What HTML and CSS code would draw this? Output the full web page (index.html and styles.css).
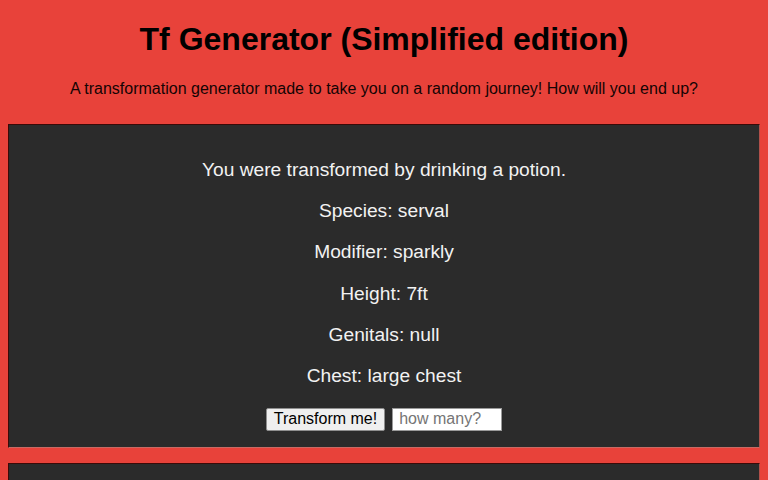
FILE: index.html
```html
<!DOCTYPE html>
<html>
<head>
<meta charset="utf-8">
<title>Tf Generator</title>
<link rel="stylesheet" href="styles.css">
</head>
<body>
<header class="header">
  <h1 class="title">Tf Generator (Simplified edition)</h1>
  <p class="subtitle">A transformation generator made to take you on a random journey! How will you end up?</p>
</header>
<section class="panel">
  <p class="line">You were transformed by drinking a potion.</p>
  <p class="line">Species: serval</p>
  <p class="line">Modifier: sparkly</p>
  <p class="line">Height: 7ft</p>
  <p class="line">Genitals: null</p>
  <p class="line">Chest: large chest</p>
  <div class="controls">
    <button class="btn" type="button">Transform me!</button>
    <input class="count" type="text" placeholder="how many?">
  </div>
</section>
<section class="panel panel-next">
  <p class="line">&nbsp;</p>
</section>
</body>
</html>
```
FILE: styles.css
```css
html {
  background: #e8423a;
}
body {
  margin: 0 8px 8px;
  font-family: "Liberation Sans", Arial, sans-serif;
  color: #000;
}
.header {
  text-align: center;
  padding-top: 1px;
}
.title {
  font-size: 32px;
  font-weight: bold;
  margin: 20.4px 0 21.4px;
}
.subtitle {
  font-size: 16px;
  margin: 21.4px 0 26px;
  color: #140404;
}
.panel {
  background: #2b2b2b;
  color: #f2f2f2;
  text-align: center;
  padding: 15px 16px 16px;
  border: 1px solid;
  border-color: #3a0a08 #b0504a #c86a64 #3a0a08;
  margin: 0 0 15px;
}
.line {
  font-size: 19.2px;
  margin: 19.2px 0;
}
.controls {
  display: flex;
  justify-content: center;
  gap: 7px;
  margin-top: 21px;
}
.btn {
  font-family: "Liberation Sans", Arial, sans-serif;
  font-size: 16px;
  color: #000;
  background: #efefef;
  border: 1px solid #8f8f8f;
  border-radius: 2px;
  padding: 1px 7px;
  white-space: nowrap;
  height: 23px;
}
.count {
  font-family: "Liberation Sans", Arial, sans-serif;
  font-size: 16px;
  width: 110px;
  height: 23px;
  box-sizing: border-box;
  border: 1px solid #9a9a9a;
  padding: 1px 6px;
  background: #fff;
}
.count::placeholder {
  color: #757575;
}
```
